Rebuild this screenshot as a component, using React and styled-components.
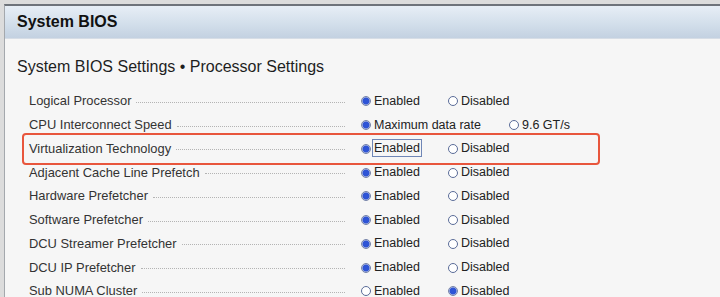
import styled, { createGlobalStyle } from "styled-components";

const GlobalStyle = createGlobalStyle`
    html, body {
        margin: 0;
        padding: 0;
        background: #dcdcdc;
    }
    body {
        font-family: "Liberation Sans", Arial, sans-serif;
    }
`

const settings = [
    { label: "Logical Processor", options: ["Enabled", "Disabled"], value: 0 },
    { label: "CPU Interconnect Speed", options: ["Maximum data rate", "9.6 GT/s"], value: 0 },
    { label: "Virtualization Technology", options: ["Enabled", "Disabled"], value: 0, focused: true, highlight: true },
    { label: "Adjacent Cache Line Prefetch", options: ["Enabled", "Disabled"], value: 0 },
    { label: "Hardware Prefetcher", options: ["Enabled", "Disabled"], value: 0 },
    { label: "Software Prefetcher", options: ["Enabled", "Disabled"], value: 0 },
    { label: "DCU Streamer Prefetcher", options: ["Enabled", "Disabled"], value: 0 },
    { label: "DCU IP Prefetcher", options: ["Enabled", "Disabled"], value: 0 },
    { label: "Sub NUMA Cluster", options: ["Enabled", "Disabled"], value: 1 },
]

export default function App() {
    return (
        <Page>
            <GlobalStyle />
            <Panel>
                <Header>System BIOS</Header>
                <Title>System BIOS Settings • Processor Settings</Title>
                <Divider />
                <List>
                    {settings.map((s) => (
                        <Row key={s.label}>
                            {s.highlight && <Highlight />}
                            <Label>
                                <span>{s.label}</span>
                                <Leader />
                            </Label>
                            <Options>
                                {s.options.map((o, i) => (
                                    <Option key={o}>
                                        <Radio checked={i === s.value} />
                                        <OptionText focused={s.focused && i === s.value}>{o}</OptionText>
                                    </Option>
                                ))}
                            </Options>
                        </Row>
                    ))}
                </List>
            </Panel>
        </Page>
    );
}

const Page = styled.div`
    width: 720px;
    height: 297px;
    padding: 4px 0 0 4px;
    box-sizing: border-box;
    overflow: hidden;
    display: flex;
    background: #dcdcdc;
`
const Panel = styled.div`
    flex: 1;
    display: flex;
    flex-direction: column;
    background: #f6f6f6;
    border-top: 2px solid #6e737a;
    border-left: 1px solid #a4a8ad;
`
const Header = styled.div`
    height: 33px;
    flex-shrink: 0;
    box-sizing: border-box;
    padding-left: 12px;
    display: flex;
    align-items: center;
    font-size: 16px;
    font-weight: 700;
    color: #111;
    background: linear-gradient(#e7eef6, #d3dfeb 55%, #c3d1e1);
    border-bottom: 1px solid #d6dde6;
`
const Title = styled.div`
    padding: 18px 0 6px 12px;
    line-height: 20px;
    font-size: 16px;
    color: #1e1e1e;
`
const Divider = styled.div`
    height: 1px;
    margin-left: 4px;
    background: #d6d6d6;
`
const List = styled.div`
    padding: 6px 0 0 24px;
`
const Row = styled.div`
    position: relative;
    height: 23.75px;
    display: grid;
    grid-template-columns: 332px auto;
    align-items: center;
    font-size: 12.5px;
`
const Highlight = styled.div`
    position: absolute;
    left: -7px;
    top: -4px;
    width: 578px;
    height: 32px;
    box-sizing: border-box;
    border: 2px solid #e8563d;
    border-radius: 4px;
    pointer-events: none;
`
const Label = styled.div`
    display: flex;
    align-items: center;
    padding-right: 16px;
    font-size: 12.9px;
    color: #333;
    white-space: nowrap;
`
const Leader = styled.div`
    flex: 1;
    margin: 3px 0 0 5px;
    border-bottom: 1px dotted #b4b4b4;
`
const Options = styled.div`
    display: flex;
    gap: 27px;
`
const Option = styled.div`
    display: flex;
    align-items: center;
    gap: 3px;
    color: #222;
`
const Radio = styled.span`
    width: 10px;
    height: 10px;
    box-sizing: border-box;
    border-radius: 50%;
    border: 1px solid ${props => props.checked ? "#7482a8" : "#5a6c98"};
    background: ${props => props.checked
        ? "radial-gradient(circle, #2e54d6 0 3px, #8da0e0 3.6px, #dfe5f5 4.5px)"
        : "#ffffff"};
    margin-top: 1px;
`
const OptionText = styled.span`
    padding: 1px 1px;
    line-height: 14px;
    margin-left: -1px;
    outline: ${props => props.focused ? "1px solid #6f86b6" : "none"};
`
